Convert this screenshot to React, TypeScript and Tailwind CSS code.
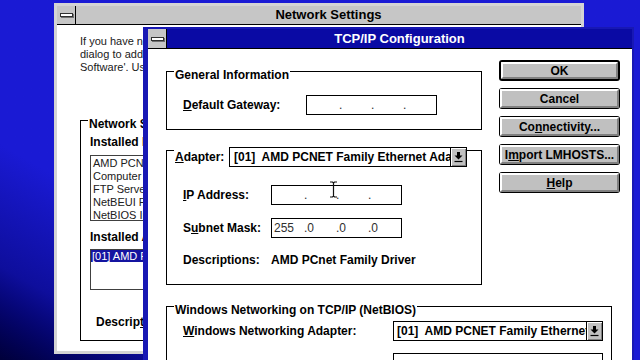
import type { ReactNode } from "react";

/* Windows 3.x style: Network Settings behind, TCP/IP Configuration dialog on top */

function SysBox() {
  return (
    <div className="flex w-[19px] shrink-0 items-center justify-center border-r border-black bg-[#c6c6c6]">
      <div className="h-[4px] w-[13px] border border-[#303030] bg-white shadow-[1px_1px_0_#707070]" />
    </div>
  );
}

function Btn({ children, def }: { children: ReactNode; def?: boolean }) {
  return (
    <div className={def ? "h-[21px] rounded-[3px] bg-black p-[2px]" : "h-[21px] rounded-[3px] bg-black p-px"}>
      <div className="flex h-full items-center justify-center rounded-[1px] border-2 border-t-white border-l-white border-b-[#808080] border-r-[#808080] bg-[#c0c0c0] text-[12px] font-bold leading-none">
        {children}
      </div>
    </div>
  );
}

function ArrowBtn() {
  return (
    <div className="flex w-[16px] shrink-0 items-center justify-center border-l border-black bg-[#c0c0c0] shadow-[inset_1px_1px_0_#fff,inset_-1px_-1px_0_#808080]">
      <svg width="9" height="11" viewBox="0 0 9 11">
        <path d="M3 0h3v3.5h2.5L4.5 7.5 0.5 3.5H3z" fill="#000" />
        <path d="M0.5 9.5h8" stroke="#000" strokeWidth="1.2" />
      </svg>
    </div>
  );
}

function Drop({ className, text, pl }: { className: string; text: string; pl: string }) {
  return (
    <div className={`flex h-[20px] border border-black bg-white ${className}`}>
      <div className={`flex-1 overflow-hidden whitespace-pre text-[12px] font-bold leading-[18px] ${pl}`}>{text}</div>
      <ArrowBtn />
    </div>
  );
}

function IpField({ parts }: { parts: string[] }) {
  return (
    <div className="flex h-[20px] w-[131px] border border-black bg-white text-[12px] leading-[18px] text-[#303030]">
      {parts.map((p, i) => (
        <div key={i} className={i === 0 ? "w-[32px] whitespace-pre pl-[2px]" : "w-[32px] whitespace-pre"}>
          {p}
        </div>
      ))}
    </div>
  );
}

function GroupLabel({ children }: { children: ReactNode }) {
  return (
    <div className="-mt-[4px] ml-[7px] w-fit bg-white px-px text-[12px] font-bold leading-[14px]">{children}</div>
  );
}

const software = ["AMD PCNET Family Ethernet Adapter", "Computer Browser", "FTP Server", "NetBEUI Protocol", "NetBIOS Interface"];

export default function App() {
  return (
    <div className="relative h-[360px] w-[640px] overflow-hidden bg-linear-to-tr from-[#00003a] via-[#0e0e9c] via-[13%] to-[#1a1ad4] to-[30%] font-['Liberation_Sans',Arial,sans-serif] text-black">
      {/* Network Settings (inactive, behind) */}
      <div className="absolute left-[54px] top-[3px] flex h-[351px] w-[530px] flex-col border-[3px] border-[#d4d4d4] bg-white">
        <div className="flex h-[19px] shrink-0 border-b border-black bg-[#c6c6c6]">
          <SysBox />
          <div className="flex-1 text-center text-[13px] font-bold leading-[18px]">Network Settings</div>
        </div>
        <div className="flex-1 pl-[23px] pt-[10px]">
          <div className="text-[11px] leading-[13px] text-[#202020]">
            If you have new network software to install, use this
            <br />
            dialog to add it by choosing 'Add Adapter' or 'Add
            <br />
            Software'. Use 'Configure' to change an item.
          </div>
          <div className="mt-[46px] w-[320px] border border-black pb-[11px]">
            <GroupLabel>Network Software and Adapter Cards</GroupLabel>
            <div className="pl-[9px]">
              <div className="mt-[4px] text-[12px] font-bold leading-[14px]">Installed Network Software:</div>
              <div className="mt-[6px] h-[66px] w-[200px] border border-[#404040] pt-px text-[11px] leading-[13px] text-[#202020]">
                {software.map((s) => (
                  <div key={s} className="whitespace-nowrap pl-[2px]">{s}</div>
                ))}
              </div>
              <div className="mt-[9px] text-[12px] font-bold leading-[14px]">Installed Adapter Cards:</div>
              <div className="mt-[5px] h-[41px] w-[200px] border border-[#404040] text-[11px] leading-[12px]">
                <div className="whitespace-nowrap bg-[#1414a0] pl-px text-white">[01]  AMD PCNET Family Ethernet Adapter</div>
              </div>
              <div className="mt-[25px] pl-[6px] text-[12px] font-bold leading-[14px]">
                Descrip<span className="underline">t</span>ion:
              </div>
            </div>
          </div>
        </div>
      </div>

      {/* TCP/IP Configuration (active) */}
      <div className="absolute left-[143px] top-[27px] h-[340px] w-[491px] border-l-[5px] border-r-[2px] border-t-[2px] border-[#1818b4] bg-white">
        <div className="flex h-[20px] border-b border-black bg-[#0a0aa4]">
          <SysBox />
          <div className="flex-1 text-center text-[13px] font-bold leading-[19px] text-white">TCP/IP Configuration</div>
        </div>
        <div className="pl-[18px]">
          <div className="flex items-start gap-[17px]">
            <div className="w-[316px] pt-[22px]">
              <div className="border border-black pb-[14px]">
                <GroupLabel>General Information</GroupLabel>
                <div className="mt-[13px] flex items-center pl-[16px]">
                  <div className="w-[123px] text-[12px] font-bold">
                    <span className="underline">D</span>efault Gateway:
                  </div>
                  <IpField parts={["", ".", ".", "."]} />
                </div>
              </div>

              <div className="mt-[20px] border border-black pb-[14px]">
                <div className="-mt-[4px] ml-[7px] flex items-center">
                  <div className="w-[55px] bg-white pl-px text-[12px] font-bold leading-[14px]">
                    <span className="underline">A</span>dapter:
                  </div>
                  <Drop className="w-[238px]" pl="pl-[4px]" text="[01]  AMD PCNET Family Ethernet Adapter" />
                </div>
                <div className="mt-[18px] flex items-center pl-[16px]">
                  <div className="w-[88px] text-[12px] font-bold">
                    <span className="underline">I</span>P Address:
                  </div>
                  <IpField parts={["", ".", ".", "."]} />
                </div>
                <div className="mt-[13px] flex items-center pl-[16px]">
                  <div className="w-[88px] text-[12px] font-bold">
                    S<span className="underline">u</span>bnet Mask:
                  </div>
                  <IpField parts={["255", ".0", ".0", ".0"]} />
                </div>
                <div className="mt-[12px] flex h-[20px] items-center gap-[6px] pl-[16px] text-[12px] font-bold">
                  <div className="w-[82px] whitespace-nowrap">Descriptions:</div>
                  <div>AMD PCnet Family Driver</div>
                </div>
              </div>
            </div>

            <div className="flex w-[121px] flex-col gap-[7px] pt-[11px]">
              <Btn def>OK</Btn>
              <Btn>Cancel</Btn>
              <Btn>
                Co<span className="underline">n</span>nectivity...
              </Btn>
              <Btn>
                I<span className="underline">m</span>port LMHOSTS...
              </Btn>
              <Btn>
                <span className="underline">H</span>elp
              </Btn>
            </div>
          </div>

          <div className="mt-[21px] w-[446px] border border-black pb-[14px]">
            <GroupLabel>Windows Networking on TCP/IP (NetBIOS)</GroupLabel>
            <div className="mt-[4px] flex items-center pl-[16px]">
              <div className="w-[210px] text-[12px] font-bold">
                <span className="underline">W</span>indows Networking Adapter:
              </div>
              <Drop className="w-[210px]" pl="pl-[3px]" text="[01]  AMD PCNET Family Ethernet Adapter" />
            </div>
            <div className="mt-[12px] flex items-center pl-[226px]">
              <div className="h-[20px] w-[210px] border border-black bg-white" />
            </div>
          </div>
        </div>
      </div>

      {/* I-beam text cursor */}
      <svg className="absolute left-[329px] top-[181px]" width="9" height="17" viewBox="0 0 9 17">
        <path d="M1 1h2.5l1 1 1-1H8M4.5 2v13M1 16h2.5l1-1 1 1H8" stroke="#111" strokeWidth="1.2" fill="none" />
      </svg>
    </div>
  );
}
